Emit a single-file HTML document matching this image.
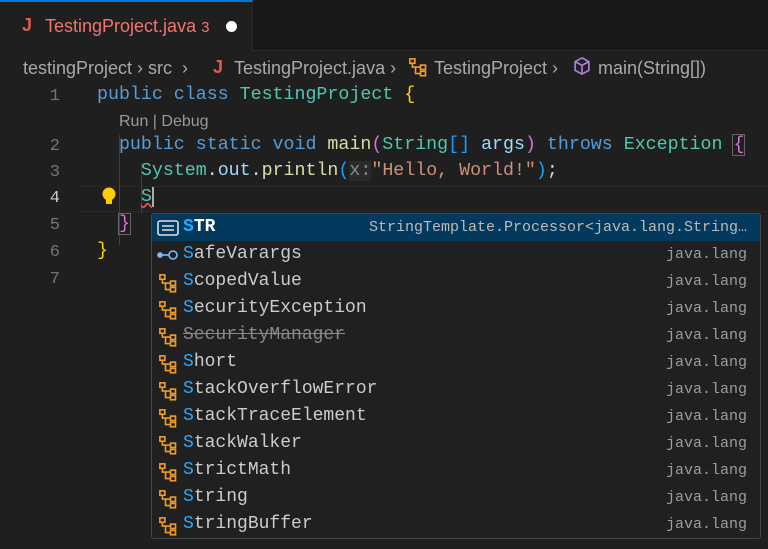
<!DOCTYPE html>
<html><head><style>
body{margin:0;width:768px;height:549px;background:#1f1f1f;overflow:hidden;position:relative;font-family:"Liberation Mono",monospace;}
.abs{position:absolute;white-space:pre;}
.tabbar{position:absolute;left:0;top:0;width:768px;height:50px;background:#181818;border-bottom:1px solid #2b2b2b;}
.tab{position:absolute;left:0;top:0;width:253px;height:51px;background:#1f1f1f;border-top:2px solid #0078d4;border-right:1px solid #2b2b2b;box-sizing:border-box;}
.sans{font-family:"Liberation Sans",sans-serif;}
.ln{position:absolute;left:30px;width:30px;text-align:right;color:#6e7681;font-size:17px;}
.code{position:absolute;left:97px;font-size:18.3px;color:#d4d4d4;white-space:pre;}
.k{color:#569cd6}.c{color:#4ec9b0}.f{color:#dcdcaa}.s{color:#ce9178}.v{color:#9cdcfe}.y{color:#ffd700}.p{color:#da70d6}.b{color:#179fff}
.sw{position:absolute;left:151px;top:213px;width:610px;height:326px;background:#202020;border:1px solid #454545;border-radius:3px;box-sizing:border-box;}
.row{position:absolute;left:0;width:608px;height:27px;}
.row .l{position:absolute;left:31px;top:3px;font-size:18px;color:#cccccc;}
.row .l b{color:#2aaaff;font-weight:normal}
.row .d{position:absolute;right:13px;top:5px;font-size:15px;color:#9d9d9d;}
.row svg{position:absolute;left:5px;top:5px;}
</style></head><body>
<div class="tabbar"></div>
<div class="tab"></div>
<div class="abs sans" style="left:22px;top:15px;font-size:18px;color:#e05a4f;font-weight:bold">J</div>
<div class="abs sans" style="left:45px;top:16px;font-size:18px;color:#f0766b">TestingProject.java <span style="font-size:15px">3</span></div>
<div class="abs" style="left:226px;top:21px;width:11px;height:11px;border-radius:50%;background:#fff"></div>

<div class="abs sans" style="left:23px;top:58px;font-size:18px;color:#a9a9a9">testingProject › src  ›</div>
<div class="abs sans" style="left:213px;top:57px;font-size:18px;color:#e05a4f;font-weight:bold">J</div>
<div class="abs sans" style="left:234px;top:58px;font-size:18px;color:#a9a9a9">TestingProject.java ›</div>
<svg class="abs" style="left:408px;top:57px" width="20" height="20" viewBox="0 0 16 16" fill="none" stroke="#ee9d28" stroke-width="1.3"><rect x="1.5" y="1.5" width="4" height="3.5"/><rect x="10" y="6.5" width="4" height="3.5"/><rect x="10" y="11.5" width="4" height="3.5"/><path d="M3.5 5v3h6.5M6 8.2v5h4"/></svg>
<div class="abs sans" style="left:434px;top:58px;font-size:18px;color:#a9a9a9">TestingProject ›</div>
<svg class="abs" style="left:572px;top:56px" width="20" height="20" viewBox="0 0 16 16" fill="none" stroke="#b180d7" stroke-width="1.3"><path d="M8 1.5l5.5 3v7L8 14.5 2.5 11.5v-7z M2.5 4.5L8 7.5l5.5-3 M8 7.5v7"/></svg>
<div class="abs sans" style="left:598px;top:58px;font-size:18px;color:#a9a9a9">main(String[])</div>

<div class="abs" style="left:80px;top:186px;width:688px;height:24px;border-top:1px solid #282828;border-bottom:1px solid #282828;"></div>
<div class="abs" style="left:119px;top:135px;width:1px;height:110px;background:#404040"></div>
<div class="abs" style="left:141px;top:163px;width:1px;height:50px;background:#404040"></div>

<div class="ln" style="top:87px">1</div>
<div class="ln" style="top:137px">2</div>
<div class="ln" style="top:163px">3</div>
<div class="ln" style="top:189px;color:#cccccc">4</div>
<div class="ln" style="top:216px">5</div>
<div class="ln" style="top:243px">6</div>
<div class="ln" style="top:270px">7</div>

<div class="code" style="top:85px"><span class="k">public class</span> <span class="c">TestingProject</span> <span class="y">{</span></div>
<div class="abs sans" style="left:119px;top:113px;font-size:16px;color:#999">Run | Debug</div>
<div class="code" style="top:135px">  <span class="k">public static void</span> <span class="f">main</span><span class="p">(</span><span class="c">String</span><span class="b">[]</span> <span class="v">args</span><span class="p">)</span> <span class="k">throws</span> <span class="c">Exception</span> <span class="p" style="outline:1px solid #666">{</span></div>
<div class="code" style="top:161px">    <span class="c">System</span>.<span class="v">out</span>.<span class="f">println</span><span class="b">(</span><span style="color:#8a8a8a;background:#2a2a2a">x:</span><span class="s">"Hello, World!"</span><span class="b">)</span>;</div>
<div class="code" style="top:187px">    <span class="c" style="text-decoration:underline wavy #f14c4c">S</span><span style="border-left:2px solid #aeafad"> </span></div>
<div class="code" style="top:214px">  <span class="p" style="outline:1px solid #666">}</span></div>
<div class="code" style="top:241px"><span class="y">}</span></div>
<svg class="abs" style="left:101px;top:186px" width="16" height="22" viewBox="0 0 16 22"><circle cx="8" cy="8" r="6.5" fill="#ffcc00"/><rect x="5" y="13" width="6" height="5" fill="#ffcc00"/></svg>

<div class="sw">
<div class="row" style="top:0;background:#04395e;border-radius:2px 2px 0 0"><svg width="22" height="18" viewBox="0 0 22 18" fill="none" stroke="#e0e0e0" stroke-width="1.6"><rect x="1" y="2" width="20" height="14" rx="2"/><path d="M5 7h12M5 11h12"/></svg><span class="l" style="color:#fff;font-weight:bold"><b style="font-weight:bold">S</b>TR</span><span class="d" style="color:#bbb">StringTemplate.Processor&lt;java.lang.String…</span></div>
<div class="row" style="top:27px"><svg width="22" height="18" viewBox="0 0 22 18" fill="none" stroke="#75beff" stroke-width="1.6"><circle cx="3" cy="9" r="2" fill="#75beff"/><path d="M5 9h7"/><circle cx="16" cy="9" r="4"/></svg><span class="l"><b>S</b>afeVarargs</span><span class="d">java.lang</span></div>
<div class="row" style="top:54px"><svg width="22" height="20" viewBox="0 0 16 16" fill="none" stroke="#ee9d28" stroke-width="1.3"><rect x="1.5" y="1.5" width="4" height="3.5"/><rect x="10" y="6.5" width="4" height="3.5"/><rect x="10" y="11.5" width="4" height="3.5"/><path d="M3.5 5v3h6.5M6 8.2v5h4"/></svg><span class="l"><b>S</b>copedValue</span><span class="d">java.lang</span></div>
<div class="row" style="top:81px"><svg width="22" height="20" viewBox="0 0 16 16" fill="none" stroke="#ee9d28" stroke-width="1.3"><rect x="1.5" y="1.5" width="4" height="3.5"/><rect x="10" y="6.5" width="4" height="3.5"/><rect x="10" y="11.5" width="4" height="3.5"/><path d="M3.5 5v3h6.5M6 8.2v5h4"/></svg><span class="l"><b>S</b>ecurityException</span><span class="d">java.lang</span></div>
<div class="row" style="top:108px"><svg width="22" height="20" viewBox="0 0 16 16" fill="none" stroke="#ee9d28" stroke-width="1.3"><rect x="1.5" y="1.5" width="4" height="3.5"/><rect x="10" y="6.5" width="4" height="3.5"/><rect x="10" y="11.5" width="4" height="3.5"/><path d="M3.5 5v3h6.5M6 8.2v5h4"/></svg><span class="l" style="text-decoration:line-through;color:#888">SecurityManager</span><span class="d">java.lang</span></div>
<div class="row" style="top:135px"><svg width="22" height="20" viewBox="0 0 16 16" fill="none" stroke="#ee9d28" stroke-width="1.3"><rect x="1.5" y="1.5" width="4" height="3.5"/><rect x="10" y="6.5" width="4" height="3.5"/><rect x="10" y="11.5" width="4" height="3.5"/><path d="M3.5 5v3h6.5M6 8.2v5h4"/></svg><span class="l"><b>S</b>hort</span><span class="d">java.lang</span></div>
<div class="row" style="top:162px"><svg width="22" height="20" viewBox="0 0 16 16" fill="none" stroke="#ee9d28" stroke-width="1.3"><rect x="1.5" y="1.5" width="4" height="3.5"/><rect x="10" y="6.5" width="4" height="3.5"/><rect x="10" y="11.5" width="4" height="3.5"/><path d="M3.5 5v3h6.5M6 8.2v5h4"/></svg><span class="l"><b>S</b>tackOverflowError</span><span class="d">java.lang</span></div>
<div class="row" style="top:189px"><svg width="22" height="20" viewBox="0 0 16 16" fill="none" stroke="#ee9d28" stroke-width="1.3"><rect x="1.5" y="1.5" width="4" height="3.5"/><rect x="10" y="6.5" width="4" height="3.5"/><rect x="10" y="11.5" width="4" height="3.5"/><path d="M3.5 5v3h6.5M6 8.2v5h4"/></svg><span class="l"><b>S</b>tackTraceElement</span><span class="d">java.lang</span></div>
<div class="row" style="top:216px"><svg width="22" height="20" viewBox="0 0 16 16" fill="none" stroke="#ee9d28" stroke-width="1.3"><rect x="1.5" y="1.5" width="4" height="3.5"/><rect x="10" y="6.5" width="4" height="3.5"/><rect x="10" y="11.5" width="4" height="3.5"/><path d="M3.5 5v3h6.5M6 8.2v5h4"/></svg><span class="l"><b>S</b>tackWalker</span><span class="d">java.lang</span></div>
<div class="row" style="top:243px"><svg width="22" height="20" viewBox="0 0 16 16" fill="none" stroke="#ee9d28" stroke-width="1.3"><rect x="1.5" y="1.5" width="4" height="3.5"/><rect x="10" y="6.5" width="4" height="3.5"/><rect x="10" y="11.5" width="4" height="3.5"/><path d="M3.5 5v3h6.5M6 8.2v5h4"/></svg><span class="l"><b>S</b>trictMath</span><span class="d">java.lang</span></div>
<div class="row" style="top:270px"><svg width="22" height="20" viewBox="0 0 16 16" fill="none" stroke="#ee9d28" stroke-width="1.3"><rect x="1.5" y="1.5" width="4" height="3.5"/><rect x="10" y="6.5" width="4" height="3.5"/><rect x="10" y="11.5" width="4" height="3.5"/><path d="M3.5 5v3h6.5M6 8.2v5h4"/></svg><span class="l"><b>S</b>tring</span><span class="d">java.lang</span></div>
<div class="row" style="top:297px"><svg width="22" height="20" viewBox="0 0 16 16" fill="none" stroke="#ee9d28" stroke-width="1.3"><rect x="1.5" y="1.5" width="4" height="3.5"/><rect x="10" y="6.5" width="4" height="3.5"/><rect x="10" y="11.5" width="4" height="3.5"/><path d="M3.5 5v3h6.5M6 8.2v5h4"/></svg><span class="l"><b>S</b>tringBuffer</span><span class="d">java.lang</span></div>
</div>
</body></html>
